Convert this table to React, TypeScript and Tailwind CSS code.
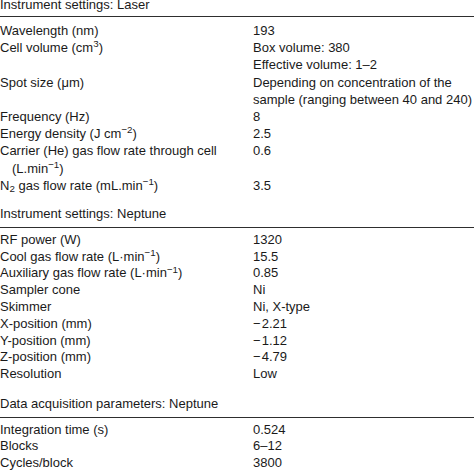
import type { ReactNode } from "react";

type RowProps = { label?: ReactNode; value?: ReactNode; indent?: boolean };

function Row({ label, value, indent }: RowProps) {
  return (
    <div className="flex">
      <div className={indent ? "w-[253px] shrink-0 pl-[12px]" : "w-[253px] shrink-0"}>{label}</div>
      <div className="whitespace-nowrap">{value}</div>
    </div>
  );
}

function Rule() {
  return <div className="h-[1.5px] bg-[#2e2e2e]" />;
}

const minus1 = <sup>−1</sup>;

export default function App() {
  return (
    <div className="w-[474px] h-[470px] overflow-hidden bg-white text-[#1a1a1a] text-[13px] font-['Liberation_Sans',Arial,sans-serif]">
      {/* Laser */}
      <div className="leading-[10px] pb-[5.75px]">Instrument settings: Laser</div>
      <Rule />
      <div className="pt-[4.75px] leading-[17.2px]">
        <Row label="Wavelength (nm)" value="193" />
        <Row label={<>Cell volume (cm<sup>3</sup>)</>} value="Box volume: 380" />
        <Row value="Effective volume: 1–2" />
        <Row label="Spot size (μm)" value="Depending on concentration of the" />
        <Row value="sample (ranging between 40 and 240)" />
        <Row label="Frequency (Hz)" value="8" />
        <Row label={<>Energy density (J cm<sup>−2</sup>)</>} value="2.5" />
        <Row label="Carrier (He) gas flow rate through cell" value="0.6" />
        <Row indent label={<>(L.min{minus1})</>} />
        <Row label={<>N<sub>2</sub> gas flow rate (mL.min{minus1})</>} value="3.5" />
      </div>

      {/* Neptune */}
      <div className="mt-[11px] leading-[17px] pb-[4.75px]">Instrument settings: Neptune</div>
      <Rule />
      <div className="pt-[3.5px] leading-[16.8px]">
        <Row label="RF power (W)" value="1320" />
        <Row label={<>Cool gas flow rate (L·min{minus1})</>} value="15.5" />
        <Row label={<>Auxiliary gas flow rate (L·min{minus1})</>} value="0.85" />
        <Row label="Sampler cone" value="Ni" />
        <Row label="Skimmer" value="Ni, X-type" />
        <Row label="X-position (mm)" value="−&#8202;2.21" />
        <Row label="Y-position (mm)" value="−&#8202;1.12" />
        <Row label="Z-position (mm)" value="−&#8202;4.79" />
        <Row label="Resolution" value="Low" />
      </div>

      {/* Data acquisition */}
      <div className="mt-[11.6px] leading-[17px] pb-[5.25px]">Data acquisition parameters: Neptune</div>
      <Rule />
      <div className="pt-[3.25px] leading-[16.8px]">
        <Row label="Integration time (s)" value="0.524" />
        <Row label="Blocks" value="6–12" />
        <Row label="Cycles/block" value="3800" />
      </div>
    </div>
  );
}
